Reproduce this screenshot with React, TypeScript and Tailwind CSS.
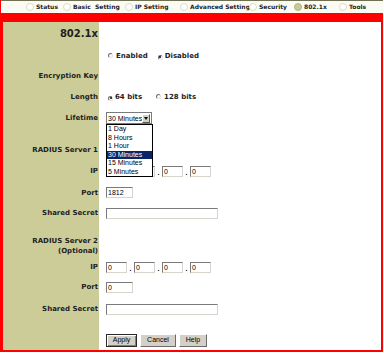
import React from 'react';

const LBL = "font-['DejaVu_Sans',sans-serif] font-bold text-[7px] leading-[10px] text-[#1e1e1e]";
const CTL = "font-['Liberation_Sans',Arial,sans-serif] text-[7px] text-black";

function Radio({ checked }: { checked?: boolean }) {
  return (
    <span className="inline-flex w-[5px] h-[5px] shrink-0 items-center justify-center rounded-full border border-t-[#6e6e6e] border-l-[#6e6e6e] border-b-[#e2e2e2] border-r-[#e2e2e2] bg-white">
      {checked && <span className="block w-[2px] h-[2px] rounded-full bg-black" />}
    </span>
  );
}

function Box({ w, value }: { w: string; value?: string }) {
  return (
    <div
      className={`${w} h-[11px] shrink-0 bg-white border border-t-[#7a7a7a] border-l-[#7a7a7a] border-b-[#d8d4cc] border-r-[#d8d4cc] pl-[1px] leading-[9px] ${CTL}`}
    >
      {value}
    </div>
  );
}

function IpBoxes() {
  return (
    <div className="flex items-center">
      <Box w="w-[21px]" value="0" />
      <span className={`w-[7px] text-center ${CTL} font-bold leading-[9px] pt-[3px]`}>.</span>
      <Box w="w-[21px]" value="0" />
      <span className={`w-[7px] text-center ${CTL} font-bold leading-[9px] pt-[3px]`}>.</span>
      <Box w="w-[21px]" value="0" />
      <span className={`w-[7px] text-center ${CTL} font-bold leading-[9px] pt-[3px]`}>.</span>
      <Box w="w-[21px]" value="0" />
    </div>
  );
}

function Row({
  h,
  label,
  children,
  pad = '',
  align = 'items-center',
  grow = false,
}: {
  h: string;
  label?: React.ReactNode;
  children?: React.ReactNode;
  pad?: string;
  align?: string;
  grow?: boolean;
}) {
  return (
    <div className={`grid grid-cols-[96px_1fr] ${h} ${grow ? 'flex-1' : 'shrink-0'}`}>
      <div className={`bg-[#cccc99] flex ${align} justify-end pr-[1px] text-right ${pad} ${LBL}`}>
        {label}
      </div>
      <div className={`bg-white flex ${align} pl-[7px] relative ${pad}`}>{children}</div>
    </div>
  );
}

const tabs: { label: string; w: string; active?: boolean }[] = [
  { label: 'Status', w: 'w-[37px]' },
  { label: 'Basic\u00a0 Setting', w: 'w-[62px]' },
  { label: 'IP Setting', w: 'w-[55px]' },
  { label: 'Advanced Setting', w: 'w-[69px]' },
  { label: 'Security', w: 'w-[45px]' },
  { label: '802.1x', w: 'w-[45px]', active: true },
  { label: 'Tools', w: 'w-[40px]' },
];

function TabBar() {
  return (
    <div className="h-[13px] shrink-0 bg-[#fbfbf4] border-t border-t-[#6f6f52] flex items-center pl-[25px] ml-[1px]">
      {tabs.map((t) => (
        <div key={t.label} className={`${t.w} shrink-0 flex items-center gap-[2px]`}>
          <span
            className={`w-[8px] h-[8px] shrink-0 rounded-full border ${
              t.active ? 'bg-[#c9c896] border-[#b5b482]' : 'bg-white border-[#dcdccc]'
            }`}
          />
          <span className="font-['DejaVu_Sans',sans-serif] font-bold text-[6px] leading-[8px] text-[#1e1e1e] whitespace-nowrap">
            {t.label}
          </span>
        </div>
      ))}
    </div>
  );
}

function Btn({ w, children, def }: { w: string; children: React.ReactNode; def?: boolean }) {
  return (
    <div
      className={`${w} h-[13px] shrink-0 bg-[#d4d0c8] flex items-center justify-center ${CTL} ${
        def
          ? 'border border-[#2a2a2a] shadow-[inset_1px_1px_0_#ffffff,inset_-1px_-1px_0_#808080]'
          : 'border border-t-white border-l-white border-b-[#6a6a6a] border-r-[#6a6a6a]'
      }`}
    >
      {children}
    </div>
  );
}

const options = ['1 Day', '8 Hours', '1 Hour', '30 Minutes', '15 Minutes', '5 Minutes'];

export default function App() {
  return (
    <div className="w-[384px] h-[353px] bg-white overflow-hidden">
      <div className="w-[383px] h-[352px] bg-[#ff0000] flex flex-col">
        <TabBar />
        <div className="flex-1 flex flex-col pt-[9px] pl-[3px] pr-[2px] pb-[2px]">
          <Row h="h-[24px]" label={<span className="text-[10px] leading-[12px]">802.1x</span>} />
          <Row h="h-[20px]">
            <div className={`flex items-center ${LBL}`}>
              <span className="ml-[2px]"><Radio /></span>
              <span className="ml-[3px]">Enabled</span>
              <span className="ml-[10px]"><Radio checked /></span>
              <span className="ml-[2px]">Disabled</span>
            </div>
          </Row>
          <Row h="h-[20px]" label="Encryption Key" />
          <Row h="h-[22px]" label="Length">
            <div className={`flex items-center ${LBL}`}>
              <span className="ml-[2px]"><Radio checked /></span>
              <span className="ml-[2px]">64 bits</span>
              <span className="ml-[14px]"><Radio /></span>
              <span className="ml-[3px]">128 bits</span>
            </div>
          </Row>
          <Row h="h-[20px]" label="Lifetime">
            <div className="w-[46px] h-[12px] bg-white border border-[#7a7a7a] flex items-center justify-between pl-[1px] pr-[1px]">
              <span className={`${CTL} leading-[9px] whitespace-nowrap`}>30 Minutes</span>
              <span className="w-[9px] h-[9px] bg-[#d4d0c8] border border-t-white border-l-white border-b-[#555] border-r-[#555] flex items-center justify-center">
                <span className="w-0 h-0 border-l-[2.5px] border-r-[2.5px] border-t-[3px] border-l-transparent border-r-transparent border-t-black" />
              </span>
            </div>
            <div className="absolute left-[7px] top-[16px] z-10 w-[47px] bg-white border border-black flex flex-col">
              {options.map((o) => (
                <div
                  key={o}
                  className={`h-[8.5px] leading-[8.5px] pl-[1px] ${CTL} ${
                    o === '30 Minutes' ? 'bg-[#0a246a] text-white' : ''
                  }`}
                >
                  {o}
                </div>
              ))}
            </div>
          </Row>
          <Row h="h-[32px]" pad="pt-[12px]" label="RADIUS Server 1" />
          <Row h="h-[22px]" label="IP">
            <IpBoxes />
          </Row>
          <Row h="h-[21px]" label="Port">
            <Box w="w-[27px]" value="1812" />
          </Row>
          <Row h="h-[20px]" label="Shared Secret">
            <Box w="w-[112px]" />
          </Row>
          <Row
            h="h-[34px]"
            pad="pt-[13px] pb-[1px]"
            label={
              <span>
                RADIUS Server 2
                <br />
                (Optional)
              </span>
            }
          />
          <Row h="h-[20px]" label="IP">
            <IpBoxes />
          </Row>
          <Row h="h-[20px]" label="Port">
            <Box w="w-[27px]" value="0" />
          </Row>
          <Row h="h-[24px]" label="Shared Secret">
            <Box w="w-[112px]" />
          </Row>
          <Row h="h-auto" grow align="items-start" pad="pt-[13px]">
            <div className="flex gap-[3px]">
              <Btn w="w-[31px]" def>Apply</Btn>
              <Btn w="w-[36px]">Cancel</Btn>
              <Btn w="w-[28px]">Help</Btn>
            </div>
          </Row>
        </div>
      </div>
    </div>
  );
}
